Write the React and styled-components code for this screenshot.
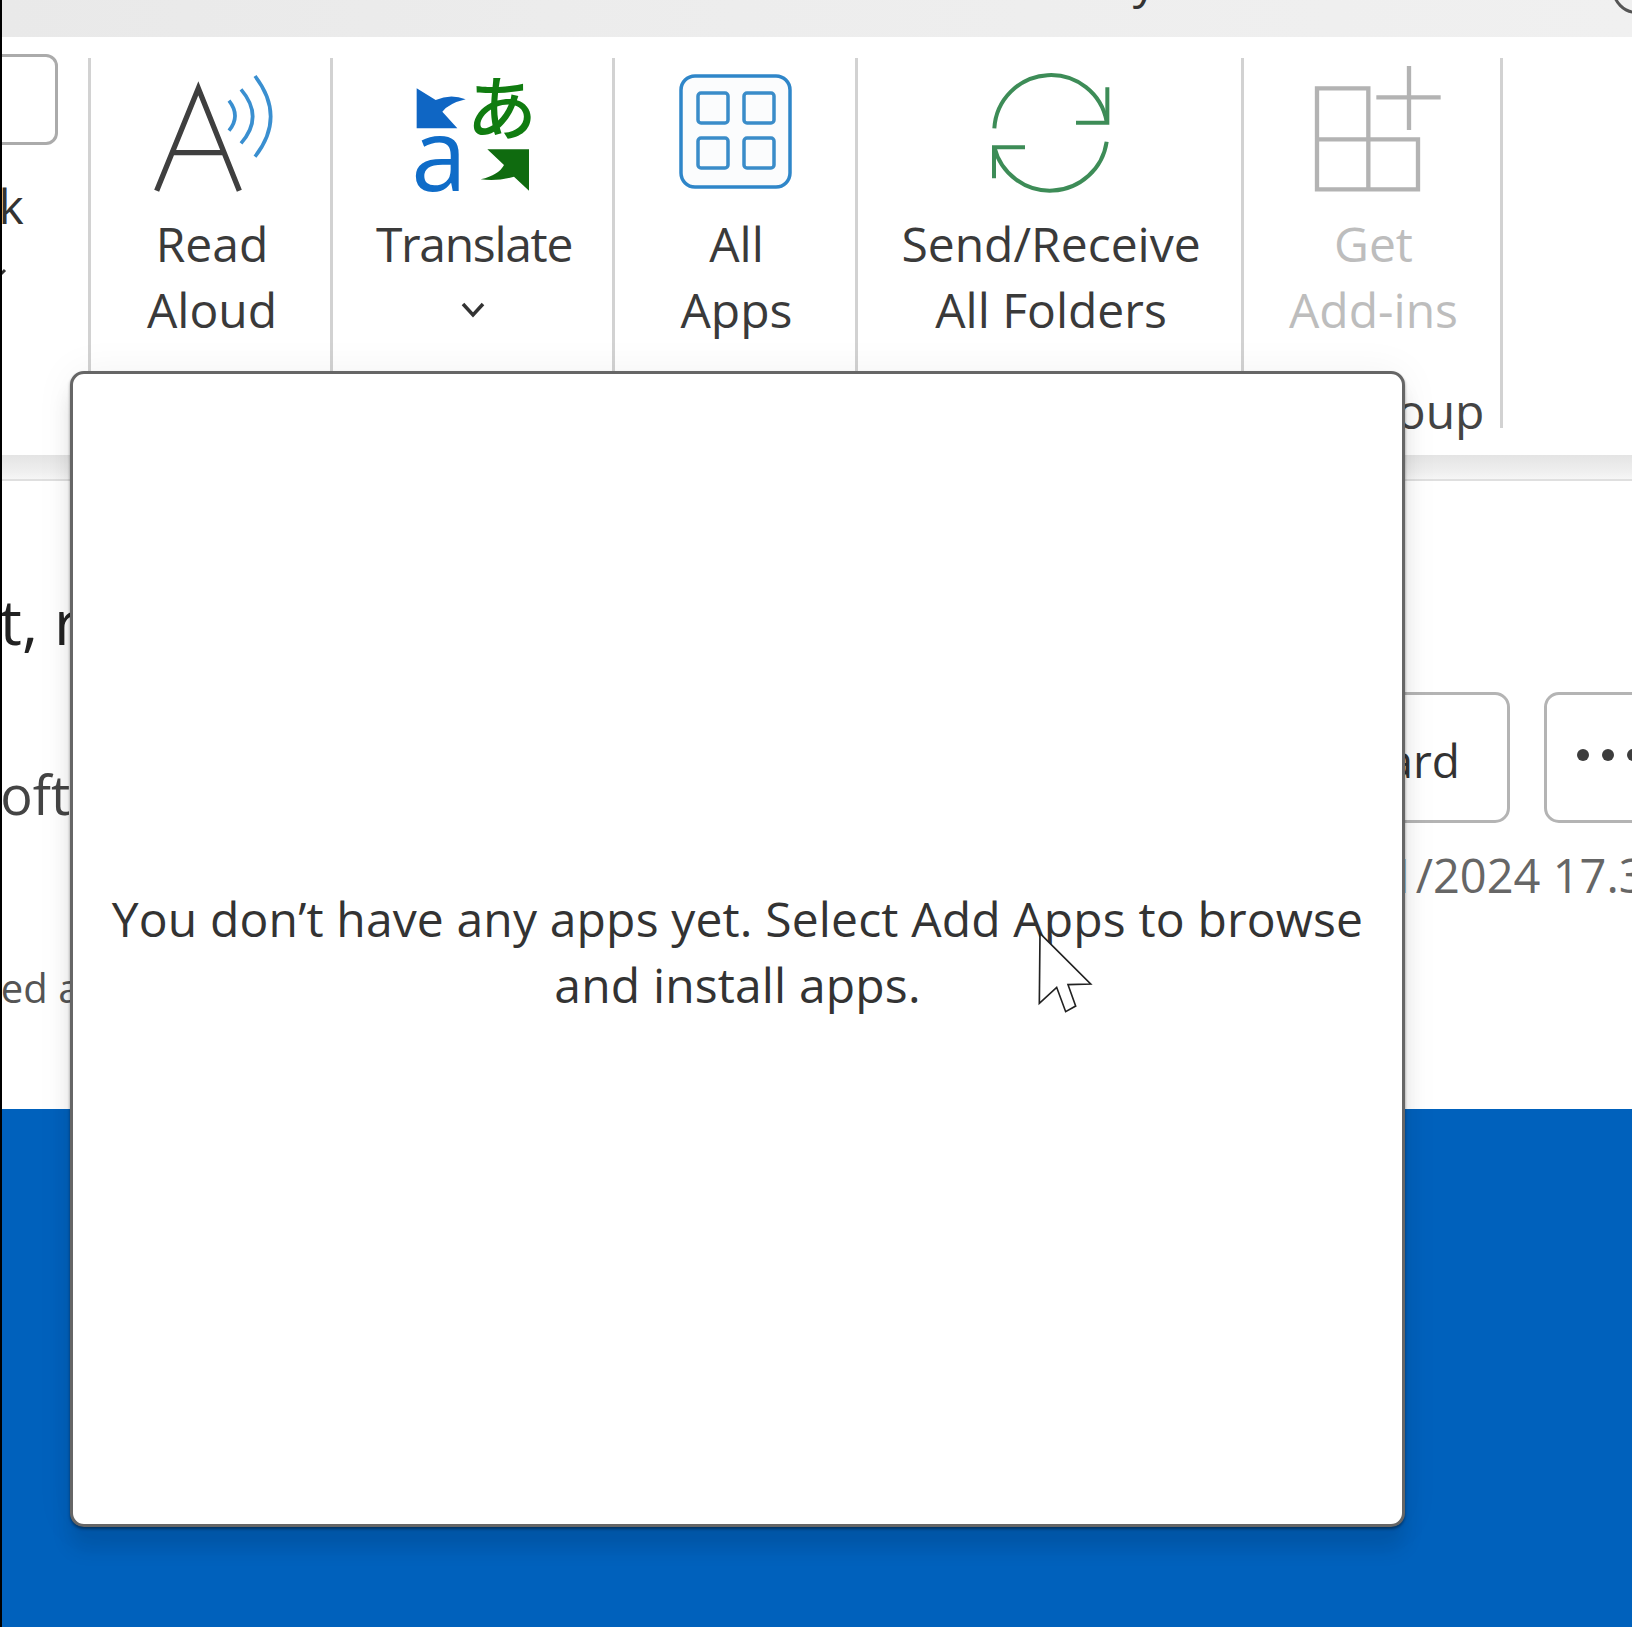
import React from "react";
import styled, { createGlobalStyle } from "styled-components";

const GlobalStyle = createGlobalStyle`
  html, body {
    margin: 0;
    padding: 0;
    background: #fff;
  }
  * {
    box-sizing: border-box;
  }
`;

const FONT = `"Open Sans", "Noto Sans", "Liberation Sans", sans-serif`;

const Page = styled.div`
  position: relative;
  width: 1632px;
  height: 1627px;
  border-left: 2px solid #000;
  overflow: hidden;
  display: flex;
  flex-direction: column;
  font-family: ${FONT};
  font-size: 48px;
  color: #333;
`;

const TitleBar = styled.div`
  flex: none;
  height: 37px;
  display: flex;
  background: linear-gradient(to right, #e9e9e9, #ededed 45%, #f0f0f0);
  overflow: hidden;
`;

const TitleText = styled.div`
  margin: -52px 0 0 828px;
  line-height: 64px;
  height: 64px;
  white-space: nowrap;
`;

const AccountCircle = styled.div`
  width: 50px;
  height: 50px;
  margin: -36px -30px 0 auto;
  border: 3px solid #555;
  border-radius: 50%;
`;

const Ribbon = styled.div`
  flex: none;
  height: 418px;
  padding-top: 21px;
  display: flex;
  align-items: flex-start;
  background: #fff;
`;

const Group = styled.div`
  flex: none;
  width: ${(p) => p.$width}px;
  height: 370px;
  padding-top: 2px;
  border-right: 3px solid #d2d2d2;
  display: flex;
  flex-direction: column;
  align-items: center;
`;

const StubGroup = styled.div`
  flex: none;
  width: 89px;
  height: 370px;
  border-right: 3px solid #d2d2d2;
  display: flex;
  flex-direction: column;
`;

const StubButton = styled.div`
  flex: none;
  width: 100px;
  height: 91px;
  margin: -4px 0 0 -44px;
  border: 3px solid #ababab;
  border-radius: 12px;
`;

const StubLabel = styled.div`
  margin: 28px 0 0 -70px;
  width: 88px;
  line-height: 66px;
  text-align: right;
  white-space: nowrap;
  color: #333;
`;

const StubChevron = styled.svg`
  margin: 28px 0 0 -18px;
  width: 24px;
  height: 16px;
  flex: none;
`;

const Icon = styled.svg`
  flex: none;
  display: block;
  width: 180px;
  height: 135px;
`;

const Label = styled.div`
  margin-top: 16px;
  padding-left: 3px;
  line-height: 66px;
  text-align: center;
  white-space: nowrap;
  letter-spacing: ${(p) => (p.$tight ? "-1.3px" : "0")};
  color: ${(p) => (p.$muted ? "#bdbdbd" : "#3a3a3a")};
`;

const Chevron = styled.svg`
  width: 26px;
  height: 18px;
  margin-top: 24px;
`;

const GroupName = styled.div`
  margin-top: auto;
  padding: 0 30px 2px 0;
  white-space: nowrap;
  line-height: 30px;
  color: #444;
`;

const RibbonShadow = styled.div`
  flex: none;
  height: 26px;
  background: linear-gradient(to bottom, #e4e4e4, #efefef 70%, #f6f6f6);
  border-bottom: 2px solid #dfdfdf;
`;

const MailPane = styled.div`
  flex: none;
  height: 628px;
  display: flex;
  justify-content: space-between;
  background: #fff;
`;

const MailInfo = styled.div`
  width: 400px;
  display: flex;
  flex-direction: column;
  align-items: flex-start;
  white-space: nowrap;
`;

const Subject = styled.div`
  margin: 100px 0 0 -272px;
  font-size: 62px;
  line-height: 80px;
  color: #222;
`;

const Sender = styled.div`
  margin: 98px 0 0 -170px;
  font-size: 54px;
  line-height: 70px;
  color: #444;
`;

const Note = styled.div`
  margin: 132px 0 0 -166px;
  font-size: 40px;
  line-height: 54px;
  color: #555;
`;

const MailActions = styled.div`
  flex: none;
  width: 500px;
  padding-top: 211px;
  display: flex;
  flex-direction: column;
  align-items: flex-end;
  margin-right: -32px;
`;

const ActionRow = styled.div`
  display: flex;
  gap: 34px;
  align-items: stretch;
  height: 131px;
`;

const ActionButton = styled.div`
  width: 250px;
  padding: 4px 47px 0 0;
  border: 3px solid #b4b4b4;
  border-radius: 15px;
  display: flex;
  align-items: center;
  justify-content: flex-end;
  color: #333;
  font-size: 46px;
`;

const MoreButton = styled.div`
  width: 120px;
  padding: 0 0 5px 30px;
  border: 3px solid #b4b4b4;
  border-radius: 15px;
  display: flex;
  gap: 13px;
  align-items: center;
`;

const Dot = styled.span`
  flex: none;
  width: 12px;
  height: 12px;
  border-radius: 50%;
  background: #3d3d3d;
`;

const MailDate = styled.div`
  align-self: flex-start;
  margin: 19px 0 0 198px;
  font-size: 47px;
  line-height: 66px;
  white-space: nowrap;
  color: #666;
`;

const Banner = styled.div`
  flex: 1;
  background: #0061bc;
`;

const AppsPopup = styled.div`
  position: absolute;
  left: 68px;
  top: 371px;
  width: 1335px;
  height: 1156px;
  padding: 0 30px;
  background: #fff;
  border: 3px solid #666;
  border-radius: 14px;
  box-shadow: 0 2px 3px rgba(0, 0, 0, 0.4), 0 22px 20px rgba(0, 0, 0, 0.1),
    0 0 40px rgba(0, 0, 0, 0.05);
  display: flex;
  align-items: center;
  justify-content: center;
  text-align: center;
  line-height: 66px;
  letter-spacing: 0.15px;
  color: #333;
`;

const PopupText = styled.div`
  margin-top: 5px;
`;

const Cursor = styled.svg`
  position: absolute;
  left: 1030px;
  top: 930px;
  width: 70px;
  height: 90px;
`;

const ReadAloudIcon = () => (
  <Icon viewBox="-57 0 540 405">
    <path
      d="M50 392 175 85 298 392M100 278H250"
      fill="none"
      stroke="#3f3f3f"
      strokeWidth="16"
    />
    <g fill="none" stroke="#3a8fd0" strokeWidth="11">
      <path d="M345 48Q439 170 345 290" />
      <path d="M303 88Q373 170 303 250" />
      <path d="M267 122Q303 168 267 212" />
    </g>
  </Icon>
);

const TranslateIcon = () => (
  <Icon viewBox="727 0 540 405">
    <path
      d="M828 85 885 120Q930 100 975 118 925 130 905 155L950 205H828Z"
      fill="#0f66c4"
    />
    <text x="812" y="392" fontSize="300" fill="#0f6cc8" fontFamily={FONT}>
      a
    </text>
    <text
      x="978"
      y="226"
      fontSize="210"
      fontWeight="500"
      fill="#107c10"
      fontFamily={`"Noto Sans CJK JP", sans-serif`}
    >
      あ
    </text>
    <path
      d="M1165 268V392L1120 350Q1070 365 1020 358 1075 345 1090 315L1040 268Z"
      fill="#0f6b0f"
    />
  </Icon>
);

const AllAppsIcon = () => (
  <Icon viewBox="-90 0 180 135">
    <rect
      x="-54"
      y="16"
      width="109"
      height="111"
      rx="14"
      fill="#fbfcfd"
      stroke="#2f86c9"
      strokeWidth="3.5"
    />
    <g fill="none" stroke="#3a8cc9" strokeWidth="3.5">
      <rect x="-37" y="33" width="30" height="30" rx="3" />
      <rect x="9" y="33" width="30" height="30" rx="3" />
      <rect x="-37" y="78" width="30" height="30" rx="3" />
      <rect x="9" y="78" width="30" height="30" rx="3" />
    </g>
  </Icon>
);

const SendReceiveIcon = () => (
  <Icon viewBox="0 0 540 405">
    <g fill="none" stroke="#3d8c57" strokeWidth="12">
      <path d="M103 205A170 170 0 0 1 440 185" />
      <path d="M442 82V188H348" />
      <path d="M440 245A172 172 0 0 1 103 262" />
      <path d="M195 262H102V355" />
    </g>
  </Icon>
);

const AddInsIcon = () => (
  <Icon viewBox="967 0 540 405">
    <path
      d="M1072 238V85H1226V388M1072 238H1375V388H1072ZM1250 112H1443M1348 18V210"
      fill="none"
      stroke="#b3b3b3"
      strokeWidth="13"
    />
  </Icon>
);

const App = () => {
  return (
    <>
      <GlobalStyle />
      <Page>
        <TitleBar>
          <TitleText>Outlook Today</TitleText>
          <AccountCircle />
        </TitleBar>

        <Ribbon>
          <StubGroup>
            <StubButton />
            <StubLabel>Link</StubLabel>
            <StubChevron viewBox="0 0 24 16">
              <path d="M3 3 12 12 21 3" fill="none" stroke="#333" strokeWidth="3" />
            </StubChevron>
          </StubGroup>
          <Group $width={242}>
            <ReadAloudIcon />
            <Label>
              Read
              <br />
              Aloud
            </Label>
          </Group>
          <Group $width={282}>
            <TranslateIcon />
            <Label $tight>Translate</Label>
            <Chevron viewBox="0 0 26 18">
              <path d="M3 3 13 14 23 3" fill="none" stroke="#333" strokeWidth="3.5" />
            </Chevron>
          </Group>
          <Group $width={243}>
            <AllAppsIcon />
            <Label>
              All
              <br />
              Apps
            </Label>
          </Group>
          <Group $width={386}>
            <SendReceiveIcon />
            <Label>
              Send/Receive
              <br />
              All Folders
            </Label>
          </Group>
          <Group $width={259}>
            <AddInsIcon />
            <Label $muted>
              Get
              <br />
              Add-ins
            </Label>
            <GroupName>New Group</GroupName>
          </Group>
        </Ribbon>

        <RibbonShadow />

        <MailPane>
          <MailInfo>
            <Subject>Important, read</Subject>
            <Sender>Microsoft</Sender>
            <Note>You replied and</Note>
          </MailInfo>
          <MailActions>
            <ActionRow>
              <ActionButton>Forward</ActionButton>
              <MoreButton>
                <Dot />
                <Dot />
                <Dot />
              </MoreButton>
            </ActionRow>
            <MailDate>11/2024 17.30</MailDate>
          </MailActions>
        </MailPane>

        <Banner />

        <AppsPopup>
          <PopupText>
            You don’t have any apps yet. Select Add Apps to browse and install apps.
          </PopupText>
        </AppsPopup>

        <Cursor viewBox="510 150 210 270">
          <path
            d="M534 160 686 312 618 314 641 378 611 395 584 322 532 370Z"
            fill="#fff"
            stroke="#222"
            strokeWidth="5"
          />
        </Cursor>
      </Page>
    </>
  );
};

export default App;
